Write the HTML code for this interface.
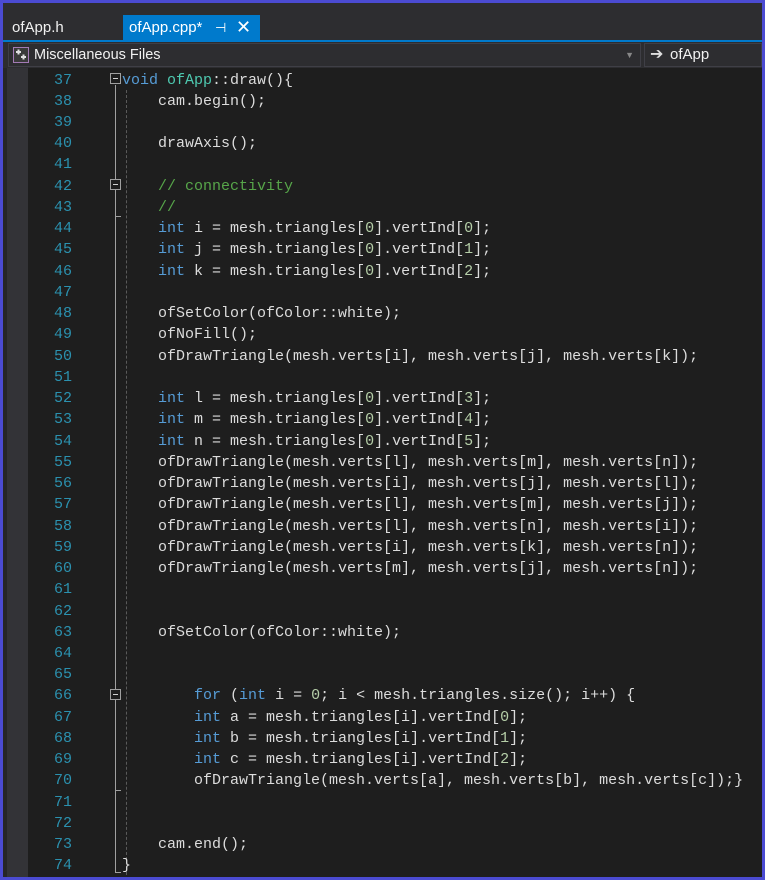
<!DOCTYPE html>
<html><head><meta charset="utf-8"><style>
*{margin:0;padding:0;box-sizing:border-box}
body{width:765px;height:880px;background:#4b4bd2;position:relative;overflow:hidden;font-family:"Liberation Sans",sans-serif}
#win{position:absolute;left:3px;top:3px;width:759px;height:874px;background:#2d2d30;overflow:hidden}
.tab{position:absolute;top:12px;height:25px;color:#f1f1f1;font-size:15px;line-height:25px}
#t1{left:9px}
#t2{left:120px;width:137px;background:#007acc;padding-left:6px;color:#fff}
#bl{position:absolute;left:0;top:37px;width:759px;height:2px;background:#007acc}
#nav{position:absolute;left:0;top:39px;width:759px;height:26px;background:#2d2d30}
#dd1{position:absolute;left:5px;top:1px;width:633px;height:24px;border:1px solid #3f3f46;background:#2d2d30;color:#f1f1f1;font-size:14.5px;line-height:22px;padding-left:25px}
#dd2{position:absolute;left:641px;top:1px;width:118px;height:24px;border:1px solid #3f3f46;color:#f1f1f1;font-size:15px;line-height:22px;padding-left:25px}
#ed{position:absolute;left:0;top:65px;width:759px;height:809px;background:#1e1e1e}
#mg{position:absolute;left:0;top:0;width:4px;height:809px;background:#262628}
#mg2{position:absolute;left:4px;top:0;width:21px;height:809px;background:#333337}
.ln{position:absolute;left:25px;width:44px;text-align:right;color:#2b91af;font-family:"Liberation Mono",monospace;font-size:15px}
.cd{position:absolute;left:119px;white-space:pre;color:#dcdcdc;font-family:"Liberation Mono",monospace;font-size:15px}
.k{color:#569cd6}.c{color:#57a64a}.t{color:#4ec9b0}.n{color:#b5cea8}
.fold{position:absolute;width:11px;height:11px;border:1px solid #a0a0a0;background:#1e1e1e}
.fold:after{content:"";position:absolute;left:2px;top:4px;width:5px;height:1px;background:#d0d0d0}
</style></head><body><div id="win">
<div class="tab" id="t1">ofApp.h</div>
<div class="tab" id="t2">ofApp.cpp*<span style="position:absolute;left:92px;font-size:13px">⊣</span><span style="position:absolute;left:113px;font-size:18px">✕</span></div>
<div id="bl"></div>
<div id="nav">
<div id="dd1"><svg style="position:absolute;left:4px;top:3px" width="16" height="16"><rect x="0.5" y="0.5" width="15" height="15" fill="#3a3a3a" stroke="#a37ab5"/><path d="M3 5h5M5.5 2.5v5M8 10h5M10.5 7.5v5" stroke="#e0e0e0" stroke-width="2"/></svg>Miscellaneous Files<span style="position:absolute;right:6px;top:0;color:#888;font-size:9px">▼</span></div>
<div id="dd2"><span style="position:absolute;left:5px;color:#ddd;font-size:16px">➔</span>ofApp</div>
</div>
<div id="ed"><div id="mg"></div><div id="mg2"></div>
<div style="position:absolute;left:112px;top:17px;width:1px;height:787px;background:#a0a0a0"></div>
<div style="position:absolute;left:112px;top:804px;width:6px;height:1px;background:#a0a0a0"></div>
<div style="position:absolute;left:112px;top:148px;width:6px;height:1px;background:#a0a0a0"></div>
<div style="position:absolute;left:112px;top:722px;width:6px;height:1px;background:#a0a0a0"></div>
<div style="position:absolute;left:123px;top:22px;width:0;height:785px;border-left:1px dashed #5a5a5a"></div>
<div class="fold" style="left:107px;top:5px"></div>
<div class="fold" style="left:107px;top:111px"></div>
<div class="fold" style="left:107px;top:621px"></div>
<div id="lines"></div>
</div>
</div>
<script>
var L=[
'<span class="k">void</span> <span class="t">ofApp</span>::draw(){',
'    cam.begin();','',
'    drawAxis();','',
'    <span class="c">// connectivity</span>',
'    <span class="c">//</span>',
'    <span class="k">int</span> i = mesh.triangles[<span class="n">0</span>].vertInd[<span class="n">0</span>];',
'    <span class="k">int</span> j = mesh.triangles[<span class="n">0</span>].vertInd[<span class="n">1</span>];',
'    <span class="k">int</span> k = mesh.triangles[<span class="n">0</span>].vertInd[<span class="n">2</span>];','',
'    ofSetColor(ofColor::white);',
'    ofNoFill();',
'    ofDrawTriangle(mesh.verts[i], mesh.verts[j], mesh.verts[k]);','',
'    <span class="k">int</span> l = mesh.triangles[<span class="n">0</span>].vertInd[<span class="n">3</span>];',
'    <span class="k">int</span> m = mesh.triangles[<span class="n">0</span>].vertInd[<span class="n">4</span>];',
'    <span class="k">int</span> n = mesh.triangles[<span class="n">0</span>].vertInd[<span class="n">5</span>];',
'    ofDrawTriangle(mesh.verts[l], mesh.verts[m], mesh.verts[n]);',
'    ofDrawTriangle(mesh.verts[i], mesh.verts[j], mesh.verts[l]);',
'    ofDrawTriangle(mesh.verts[l], mesh.verts[m], mesh.verts[j]);',
'    ofDrawTriangle(mesh.verts[l], mesh.verts[n], mesh.verts[i]);',
'    ofDrawTriangle(mesh.verts[i], mesh.verts[k], mesh.verts[n]);',
'    ofDrawTriangle(mesh.verts[m], mesh.verts[j], mesh.verts[n]);','','',
'    ofSetColor(ofColor::white);','','',
'        <span class="k">for</span> (<span class="k">int</span> i = <span class="n">0</span>; i &lt; mesh.triangles.size(); i++) {',
'        <span class="k">int</span> a = mesh.triangles[i].vertInd[<span class="n">0</span>];',
'        <span class="k">int</span> b = mesh.triangles[i].vertInd[<span class="n">1</span>];',
'        <span class="k">int</span> c = mesh.triangles[i].vertInd[<span class="n">2</span>];',
'        ofDrawTriangle(mesh.verts[a], mesh.verts[b], mesh.verts[c]);}','','',
'    cam.end();',
'}'];
var h='';
for(var i=0;i<L.length;i++){var y=(3.5+i*21.24).toFixed(2);
h+='<div class="ln" style="top:'+y+'px">'+(37+i)+'</div><div class="cd" style="top:'+y+'px">'+L[i]+'</div>';}
document.getElementById('lines').innerHTML=h;
</script>
</body></html>
